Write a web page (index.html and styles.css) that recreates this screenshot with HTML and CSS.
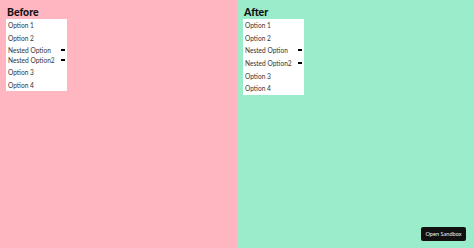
FILE: index.html
```
<!DOCTYPE html>
<html lang="en">
<head>
    <meta charset="UTF-8">
    <meta name="viewport" content="width=device-width, initial-scale=1.0">
    <title>Nested Menu</title>
    <link rel="stylesheet" href="styles.css">
</head>
<body>
    <div class="panes">
        <div class="pane pane-before">
            <h1 class="pane-title">Before</h1>
            <ul class="menu">
                <li class="menu-item">Option 1</li>
                <li class="menu-item">Option 2</li>
                <li class="nested">
                    <div class="menu-item nested-item">Nested Option <span class="dash"></span></div>
                    <div class="menu-item nested-item">Nested Option2 <span class="dash"></span></div>
                </li>
                <li class="menu-item">Option 3</li>
                <li class="menu-item">Option 4</li>
            </ul>
        </div>
        <div class="pane pane-after">
            <h1 class="pane-title">After</h1>
            <ul class="menu">
                <li class="menu-item">Option 1</li>
                <li class="menu-item">Option 2</li>
                <li class="menu-item">Nested Option <span class="dash"></span></li>
                <li class="menu-item">Nested Option2 <span class="dash"></span></li>
                <li class="menu-item">Option 3</li>
                <li class="menu-item">Option 4</li>
            </ul>
        </div>
    </div>
    <a class="sandbox-button" href="#">Open Sandbox</a>
</body>
</html>
```
FILE: styles.css
```
body {
    margin: 0;
    font-family: Lato, "Open Sans", sans-serif;
    color: #222;
}
.panes {
    display: flex;
    height: 248px;
}
.pane {
    flex: 1;
    padding: 0 6px;
}
.pane-before {
    background-color: #ffb6c1;
}
.pane-after {
    background-color: #9aecca;
}
.pane-title {
    margin: 6px 0 0;
    padding-left: 1px;
    font-size: 10.5px;
    line-height: 13px;
    font-weight: 900;
    color: #111;
}
.menu {
    list-style: none;
    margin: 0;
    padding: 0;
    width: 61px;
    background-color: #fff;
}
.menu-item {
    display: flex;
    align-items: center;
    justify-content: space-between;
    height: 12.6px;
    padding: 0 2px;
    font-size: 6.6px;
    color: #333;
}
.nested {
    padding-top: 1.3px;
    height: 20.2px;
}
.nested-item {
    height: 10px;
}
.dash {
    display: inline-block;
    width: 4px;
    height: 2px;
    margin-right: 0.5px;
    background-color: #000;
}
.sandbox-button {
    position: fixed;
    right: 8px;
    bottom: 7px;
    padding: 0 4.5px;
    height: 14px;
    line-height: 14px;
    font-size: 5.6px;
    color: #eee;
    background-color: #111;
    border-radius: 2px;
    text-decoration: none;
}
```
